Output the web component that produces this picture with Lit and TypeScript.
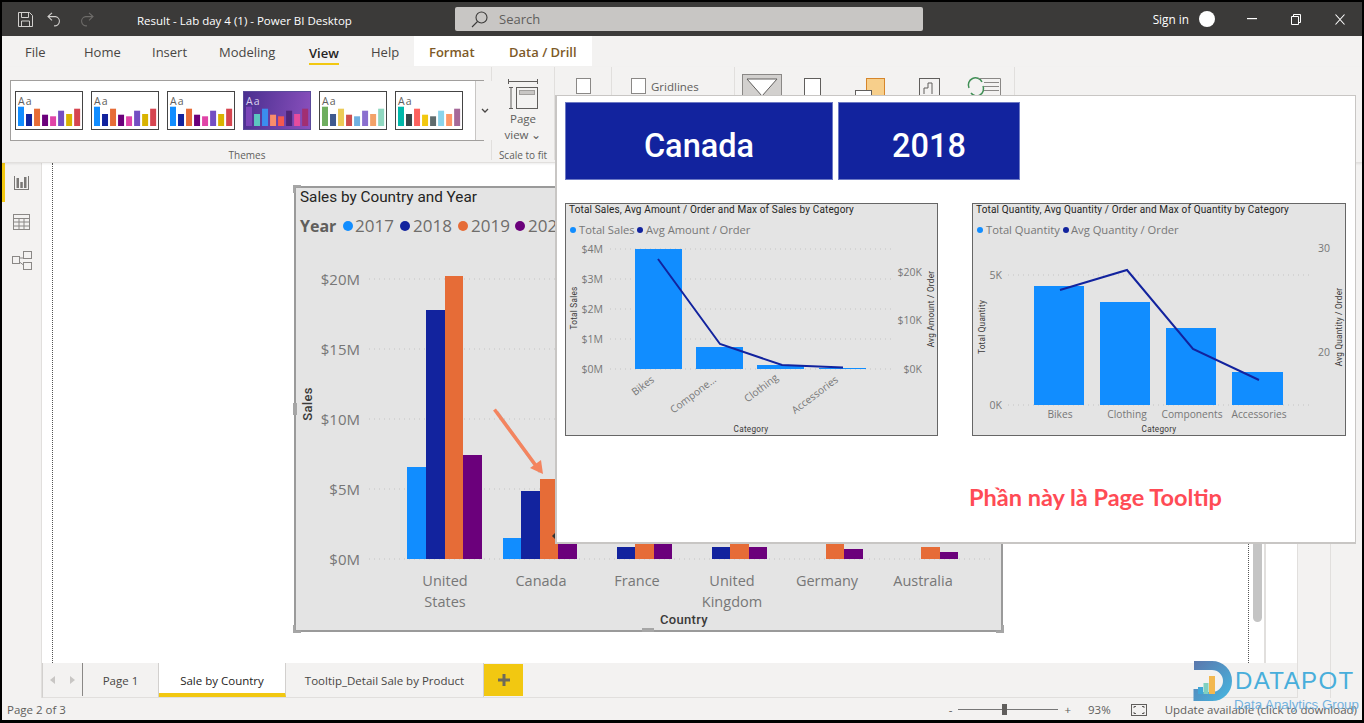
import { LitElement, html, css, svg } from "lit";
import { customElement } from "lit/decorators.js";

const THEMES = [
  { cls: "", ink: "#605e5c", bars: ["#118DFF", "#12239E", "#E66C37", "#6B007B", "#E044A7", "#744EC2", "#D9B300", "#D64550"] },
  { cls: "", ink: "#605e5c", bars: ["#118DFF", "#12239E", "#E66C37", "#6B007B", "#E044A7", "#744EC2", "#D9B300", "#D64550"] },
  { cls: "", ink: "#605e5c", bars: ["#118DFF", "#12239E", "#E66C37", "#6B007B", "#E044A7", "#744EC2", "#D9B300", "#D64550"] },
  { cls: "dark", ink: "#d9d0ee", bars: ["#7B45B8", "#5CC6C0", "#3B8EEF", "#F98D6B", "#F4584F", "#4D2578", "#E54C9E", "#A12F72"] },
  { cls: "", ink: "#605e5c", bars: ["#6FAE5F", "#3F5A8F", "#ECCB57", "#CF4D4D", "#6FB0E0", "#8A6FCF", "#F3A268", "#90D8C0"] },
  { cls: "", ink: "#605e5c", bars: ["#01B8AA", "#374649", "#FD625E", "#F2C80F", "#5F6B6D", "#8AD4EB", "#FE9666", "#A66999"] },
];
const THUMB_H = [19.3, 12, 17.3, 11.3, 9.7, 15.3, 12, 17.3];
const C = { blue: "#118DFF", navy: "#12239E", orange: "#E66C37", purple: "#6B007B" };

const rot = (x: number, y: number, t: string, cls: string, deg = -90, anchor = "middle") =>
  svg`<text class=${cls} text-anchor=${anchor} transform="translate(${x} ${y}) rotate(${deg})">${t}</text>`;
const txt = (x: number, y: number, t: string, cls: string, anchor = "start") =>
  svg`<text class=${cls} x=${x} y=${y} text-anchor=${anchor}>${t}</text>`;
const dotLine = (x1: number, x2: number, y: number) =>
  svg`<line class="grid" x1=${x1} x2=${x2} y1=${y} y2=${y}></line>`;
const bar = (x1: number, x2: number, top: number, base: number, fill: string) =>
  svg`<rect x=${x1} y=${top} width=${x2 - x1} height=${base - top} fill=${fill}></rect>`;

@customElement("app-root")
export class AppRoot extends LitElement {
  static styles = css`
    :host { display: block; position: relative; width: 1364px; height: 723px; overflow: hidden; background: #000; font-family: "Open Sans", sans-serif; color: #605e5c; }
    .app { display: flex; flex-direction: column; width: 1360px; height: 718px; margin: 2px 2px 3px; background: #f3f2f1; }
    svg { display: block; flex: none; }

    .titlebar { height: 34px; flex: none; background: #3b3a39; display: flex; align-items: center; padding-left: 16px; color: #fff; }
    .qat-save { margin-right: 14px; }
    .qat-undo { margin-right: 19px; }
    .doc { width: 318px; margin: 3px 0 0 43px; flex: none; font-size: 11.5px; white-space: nowrap; }
    .search { width: 468px; height: 24px; flex: none; background: #c8c6c4; border-radius: 2px; display: flex; align-items: center; padding-left: 16px; box-sizing: border-box; gap: 11px; font-size: 13px; color: #605e5c; }
    .win { margin-left: auto; display: flex; align-items: center; font-size: 11.8px; }
    .avatar { width: 16px; height: 16px; border-radius: 50%; background: #fff; margin: 0 32px 0 10px; }
    .win svg { margin-right: 34px; }
    .win svg:last-child { margin-right: 17px; }

    .tabs { height: 31px; flex: none; display: grid; grid-template-columns: 59px 68px 67px 90px 62px 43px 80px 98px; padding-left: 23px; font-size: 13px; color: #484644; }
    .tab { display: flex; align-items: center; height: 30px; padding-top: 2px; box-sizing: border-box; }
    .tab span { display: inline-block; }
    .tab.active { font-weight: 600; color: #252423; }
    .tab.active span { border-bottom: 2.5px solid #f2c811; padding-bottom: 1px; margin-top: 4px; }
    .tab.ctx { background: #fff; color: #7d5a28; font-weight: 600; padding-left: 15px; }

    .ribbon { height: 96px; flex: none; display: flex; box-sizing: border-box; border-bottom: 1px solid #e1dfdd; box-shadow: 0 1px 2px rgba(0,0,0,.08); position: relative; z-index: 1; }
    .group { display: flex; flex-direction: column; align-items: center; flex: none; border-right: 1px solid #e1dfdd; margin-bottom: 2px; box-sizing: border-box; }
    .group > * { flex: none; }
    .g-themes { width: 490px; padding: 13px 0 0 8px; align-items: flex-start; }
    .gallery { width: 474px; height: 61px; box-sizing: border-box; border: 1px solid #a19f9d; background: #fff; display: flex; padding: 10px 0 0 4px; gap: 8px; }
    .thumb { width: 68px; height: 39px; flex: none; background: #fff; box-sizing: border-box; border: 1px solid #444; }
    .thumb.dark { background: linear-gradient(100deg, #4a2f8f, #8a50bd); border-color: #5a4a9a; }
    .thumb text { font-family: "Open Sans", sans-serif; font-size: 10.5px; letter-spacing: 1px; }
    .more { width: 17px; height: 59px; margin: -10px 0 0 4px; border-left: 1px solid #c8c6c4; background: #f3f2f1; display: flex; align-items: center; justify-content: center; flex: none; }
    .glabel { font-size: 10px; color: #605e5c; line-height: 14px; white-space: nowrap; }
    .g-themes .glabel { width: 474px; text-align: center; margin-top: 7px; }
    .g-page { width: 63px; padding-top: 11px; }
    .g-page .line { font-size: 11.5px; line-height: 16px; }
    .g-page .line.first { margin-top: 1px; }
    .g-page .glabel { margin-top: 5px; }
    .g-mobile { width: 57px; padding-top: 11px; }
    .g-grid { width: 123px; padding: 11px 0 0 19px; align-items: flex-start; }
    .check { display: flex; align-items: center; gap: 5px; font-size: 11.5px; }
    .box { width: 15px; height: 16px; box-sizing: border-box; border: 1px solid #8a8886; background: #fff; }
    .g-panes { width: 280px; padding: 7px 0 0 7px; align-items: flex-start; }

    .body { flex: 1; display: flex; min-height: 0; }
    .rail { width: 40px; flex: none; display: flex; flex-direction: column; border-right: 1px solid #e1dfdd; box-sizing: border-box; }
    .railitem { height: 39px; display: flex; align-items: center; justify-content: center; border-left: 3px solid transparent; box-sizing: border-box; padding-right: 3px; }
    .railitem.on { border-left-color: #f2c811; }
    .center { width: 1255px; flex: none; display: flex; flex-direction: column; }
    .canvas { height: 500px; flex: none; background: #fff; display: flex; padding-left: 10px; box-sizing: border-box; }
    .page { width: 1197px; flex: none; box-sizing: border-box; border-left: 1px dotted #555; border-right: 1px dotted #555; padding: 24px 0 0 242px; }
    .scroll { display: flex; align-items: flex-end; flex: 1; padding-left: 4px; }
    .thumbbar { width: 9px; height: 459px; margin-bottom: 41px; background: #c4c4c4; border-radius: 0 0 5px 5px; }
    .track { width: 2px; height: 100%; margin-left: 2px; background: #e1dfdd; }
    .visual { width: 707px; height: 444px; overflow: visible; }

    .pages { height: 35px; flex: none; display: flex; border-left: 1px solid #d2d0ce; box-sizing: border-box; border-bottom: 1px solid #e1dfdd; }
    .nav { width: 39px; flex: none; border-right: 1px solid #8a8886; display: flex; align-items: center; justify-content: center; gap: 15px; margin-bottom: 1px; }
    .ptab { display: flex; align-items: center; justify-content: center; font-size: 11.5px; box-sizing: border-box; color: #484644; flex: none; border-right: 1px solid #d2d0ce; }
    .ptab.p1 { width: 76px; }
    .ptab.p2 { width: 127px; background: #fff; color: #252423; border-bottom: 4px solid #f2c811; padding-top: 4px; font-weight: 500; }
    .ptab.p3 { width: 198px; }
    .add { width: 39px; height: 32px; flex: none; margin-top: 1px; background: #f2c811; display: flex; align-items: center; justify-content: center; }
    .side { width: 33px; flex: none; border-left: 1px solid #e1dfdd; box-sizing: border-box; }
    .status { height: 22px; flex: none; display: flex; align-items: center; font-size: 11.5px; padding-left: 5px; color: #605e5c; border-top: 1px solid transparent; box-sizing: border-box; white-space: nowrap; }
    .zoom { margin-left: auto; display: flex; align-items: center; }
    .slider { width: 100px; height: 1px; background: #777; margin: 0 6px; position: relative; }
    .knob { position: absolute; left: 44px; top: -5px; width: 5px; height: 11px; background: #605e5c; }
    .pct { margin: 0 20px 0 17px; font-size: 11.5px; }
    .update { margin: 0 5px 0 18px; font-size: 11.5px; }

    .tip { position: absolute; left: 555px; top: 95px; width: 801px; height: 449px; box-sizing: border-box; background: #fff; border: 1px solid #c8c6c4; border-width: 1px 1px 2px 2px; padding: 6px 0 0 8px; z-index: 5; }
    .cards { display: flex; gap: 5px; }
    .card { height: 78px; box-sizing: border-box; padding-top: 9px; background: #12239E; border: 1px solid #6d79c4; color: #fff; display: flex; align-items: center; justify-content: center; font-family: Roboto, sans-serif; font-weight: 500; font-size: 32.5px; }
    .card.c1 { width: 268px; }
    .card.c2 { width: 182px; }
    .charts { display: flex; gap: 34px; margin-top: 23px; }
    .chart { background: #e4e4e4; box-sizing: border-box; border: 1px solid #666; flex: none; }
    .chart svg { overflow: hidden; }
    .note { margin: 47px 0 0 404px; font-family: Lato, sans-serif; font-weight: 700; font-size: 23.5px; line-height: 28px; color: #ff4b55; white-space: nowrap; }

    .mark { position: absolute; left: 1194px; top: 660px; width: 170px; height: 60px; z-index: 6; overflow: visible; }
    .mk1 { font-family: "Liberation Sans", sans-serif; font-size: 24px; letter-spacing: 1.4px; fill: #48aedb; }
    .mk2 { font-family: "Liberation Sans", sans-serif; font-size: 13.3px; fill: #5fa8dc; opacity: .85; }

    text { font-family: "Open Sans", sans-serif; }
    .grid { stroke: #c4c4c4; stroke-width: 1; stroke-dasharray: 1 4; }
    .t-title { font-family: Roboto, sans-serif; font-size: 15.3px; fill: #252423; }
    .t-year { font-family: "Open Sans", sans-serif; font-size: 16px; font-weight: 700; fill: #605e5c; }
    .t-leg { font-size: 17px; fill: #6f6d6b; }
    .t-ax { font-size: 15px; fill: #777; }
    .t-cat { font-size: 14.5px; fill: #777; }
    .t-name { font-family: Roboto, sans-serif; font-size: 13px; font-weight: 500; fill: #3b3a39; letter-spacing: .3px; }
    .s-title { font-family: Roboto, sans-serif; font-size: 10px; font-weight: 400; fill: #252423; letter-spacing: .15px; }
    .s-leg { font-size: 11.2px; fill: #777; }
    .s-ax { font-size: 10.5px; fill: #777; }
    .s-cat { font-size: 10.2px; fill: #777; }
    .s-name { font-family: Roboto, sans-serif; font-size: 8.2px; font-weight: 400; fill: #3b3a39; letter-spacing: .25px; }
    .handle { fill: #a6a6a6; }
  `;

  private thumb(t: (typeof THEMES)[number]) {
    return html`<div class="thumb ${t.cls}">
      <svg width="66" height="37" viewBox="0 0 66 37">
        <text x="2" y="13" fill=${t.ink}>Aa</text>
        ${t.bars.map((c, i) => svg`<rect x=${2 + i * 8.02} y=${34 - THUMB_H[i]} width="6" height=${THUMB_H[i]} fill=${c}></rect>`)}
      </svg>
    </div>`;
  }

  private mainChart() {
    const base = 559;
    const ticks: [string, number][] = [["$20M", 279], ["$15M", 349], ["$10M", 419], ["$5M", 489], ["$0M", 559]];
    const cats: [number, string, string?][] = [[445, "United", "States"], [541, "Canada"], [637, "France"], [732, "United", "Kingdom"], [827, "Germany"], [923, "Australia"]];
    const legend: [number, number, string, string][] = [[348, 355, "2017", C.blue], [405, 413, "2018", C.navy], [463, 471, "2019", C.orange], [520, 528, "2020", C.purple]];
    const bars: [number, number, number, string][] = [
      [407, 426, 467, C.blue], [426, 445, 310, C.navy], [445, 463, 276, C.orange], [463, 482, 455, C.purple],
      [503, 521, 538, C.blue], [521, 540, 491, C.navy], [540, 558, 479, C.orange], [558, 577, 544, C.purple],
      [617, 635, 547, C.navy], [635, 654, 520, C.orange], [654, 672, 530, C.purple],
      [712, 730, 547, C.navy], [730, 749, 530, C.orange], [749, 767, 547, C.purple],
      [826, 844, 525, C.orange], [844, 863, 549, C.purple],
      [921, 940, 547, C.orange], [940, 958, 552, C.purple],
    ];
    return html`<svg class="visual" viewBox="295 187 707 444">
      <rect x="295" y="187" width="707" height="444" fill="#e4e4e4" stroke="#9a9a9a" stroke-width="2"></rect>
      ${txt(300, 202, "Sales by Country and Year", "t-title")}
      ${txt(300, 232, "Year", "t-year")}
      ${legend.map(([d, x, t, c]) => svg`<circle cx=${d} cy="226" r="5" fill=${c}></circle>${txt(x, 232, t, "t-leg")}`)}
      ${ticks.map(([t, y]) => svg`${dotLine(369, 992, y)}${txt(360, y + 5.5, t, "t-ax", "end")}`)}
      ${bars.map(([a, b, top, c]) => bar(a, b, top, base, c))}
      ${cats.map(([x, a, b]) => svg`${txt(x, 586, a, "t-cat", "middle")}${b ? txt(x, 607, b, "t-cat", "middle") : ""}`)}
      ${txt(684, 624, "Country", "t-name", "middle")}
      ${rot(312, 404, "Sales", "t-name")}
      <line x1="497" y1="412" x2="540" y2="472" stroke="#777" stroke-width="3" opacity=".45"></line>
      <line x1="494.5" y1="409.5" x2="537" y2="467" stroke="#f4845f" stroke-width="3.5"></line>
      <path d="M543 474 L530 468 L541 460 Z" fill="#f4845f"></path>
      <path d="M552 536 L555 533 V539 Z" fill="#333"></path>
      <path class="handle" d="M293 185 h8 v2.5 h-5.5 v5.5 h-2.5 Z"></path>
      <path class="handle" d="M293 625 v8 h8 v-2.5 h-5.5 v-5.5 Z"></path>
      <path class="handle" d="M1004 625 v8 h-8 v-2.5 h5.5 v-5.5 Z"></path>
      <rect class="handle" x="293" y="403" width="4" height="12"></rect>
      <rect class="handle" x="642" y="628" width="12" height="4"></rect>
    </svg>`;
  }

  private salesChart() {
    const base = 369;
    return html`<div class="chart">
      <svg width="371" height="231" viewBox="566 204 371 231">
        ${txt(569, 213, "Total Sales, Avg Amount / Order and Max of Sales by Category", "s-title")}
        <circle cx="573" cy="230" r="3" fill=${C.blue}></circle>${txt(579, 234, "Total Sales", "s-leg")}
        <circle cx="640" cy="230" r="3" fill=${C.navy}></circle>${txt(646, 234, "Avg Amount / Order", "s-leg")}
        ${([["$4M", 249], ["$3M", 279], ["$2M", 309], ["$1M", 339], ["$0M", 369]] as [string, number][]).map(([t, y]) => svg`${dotLine(610, 893, y)}${txt(603, y + 4, t, "s-ax", "end")}`)}
        ${([["$20K", 272], ["$10K", 320], ["$0K", 369]] as [string, number][]).map(([t, y]) => txt(922, y + 4, t, "s-ax", "end"))}
        ${bar(635, 682, 249, base, C.blue)}${bar(696, 743, 347, base, C.blue)}${bar(757, 804, 365, base, C.blue)}${bar(819, 866, 368, base, C.blue)}
        <polyline points="658,259 720,344 782,365 843,367.5" fill="none" stroke=${C.navy} stroke-width="2"></polyline>
        ${rot(655, 381, "Bikes", "s-cat", -37, "end")}
        ${rot(717, 381, "Compone...", "s-cat", -37, "end")}
        ${rot(779, 379, "Clothing", "s-cat", -37, "end")}
        ${rot(839, 381, "Accessories", "s-cat", -37, "end")}
        ${txt(751, 432, "Category", "s-name", "middle")}
        ${rot(577, 308, "Total Sales", "s-name")}
        ${rot(934, 309, "Avg Amount / Order", "s-name")}
      </svg>
    </div>`;
  }

  private qtyChart() {
    const base = 405;
    const names: [number, string][] = [[1060, "Bikes"], [1127, "Clothing"], [1192, "Components"], [1259, "Accessories"]];
    return html`<div class="chart">
      <svg width="372" height="231" viewBox="973 204 372 231">
        ${txt(976, 213, "Total Quantity, Avg Quantity / Order and Max of Quantity by Category", "s-title")}
        <circle cx="980" cy="230" r="3" fill=${C.blue}></circle>${txt(986, 234, "Total Quantity", "s-leg")}
        <circle cx="1066" cy="230" r="3" fill=${C.navy}></circle>${txt(1071, 234, "Avg Quantity / Order", "s-leg")}
        ${dotLine(1008, 1312, 275)}${dotLine(1008, 1312, 405)}
        ${txt(1002, 279, "5K", "s-ax", "end")}${txt(1002, 409, "0K", "s-ax", "end")}
        ${txt(1318, 252, "30", "s-ax")}${txt(1318, 356, "20", "s-ax")}
        ${bar(1034, 1084, 286, base, C.blue)}${bar(1100, 1150, 302, base, C.blue)}${bar(1166, 1216, 328, base, C.blue)}${bar(1232, 1283, 372, base, C.blue)}
        <polyline points="1060,290 1127,270 1193,349 1259,380" fill="none" stroke=${C.navy} stroke-width="2"></polyline>
        ${names.map(([x, t]) => txt(x, 418, t, "s-cat", "middle"))}
        ${txt(1159, 432, "Category", "s-name", "middle")}
        ${rot(985, 327, "Total Quantity", "s-name")}
        ${rot(1342, 327, "Avg Quantity / Order", "s-name")}
      </svg>
    </div>`;
  }

  render() {
    return html`
      <div class="app">
        <div class="titlebar">
          <svg class="qat-save" width="15" height="15" viewBox="0 0 15 15" fill="none" stroke="#d2d0ce"><path d="M.5 .5 H11.5 L14.5 3.5 V14.5 H.5 Z M3.5 .5 V5.5 H10.5 V.5 M3.5 14.5 V9 H11.5 V14.5"></path></svg>
          <svg class="qat-undo" width="14" height="15" viewBox="0 0 14 15" fill="none" stroke="#d2d0ce" stroke-width="1.1"><path d="M5 .8 L1 4.6 L5 8.4 M1 4.6 H8.5 A4.6 4.6 0 0 1 7 13.8"></path></svg>
          <svg width="14" height="15" viewBox="0 0 14 15" fill="none" stroke="#6e6c6a" stroke-width="1.1"><path d="M9 .8 L13 4.6 L9 8.4 M13 4.6 H5.5 A4.6 4.6 0 0 0 7 13.8"></path></svg>
          <div class="doc">Result - Lab day 4 (1) - Power BI Desktop</div>
          <div class="search">
            <svg width="17" height="17" viewBox="0 0 17 17" fill="none" stroke="#3b3a39" stroke-width="1.1"><circle cx="10.5" cy="6.5" r="5.5"></circle><path d="M6.5 10.5 L1 16"></path></svg>
            Search
          </div>
          <div class="win">
            Sign in <div class="avatar"></div>
            <svg width="10" height="2" viewBox="0 0 10 2"><rect width="10" height="1.2" fill="#fff"></rect></svg>
            <svg width="10" height="11" viewBox="0 0 10 11" fill="none" stroke="#fff"><path d="M2.5 2.5 V.5 H9.5 V8.5 H7.5 M.5 2.5 H7.5 V10.5 H.5 Z"></path></svg>
            <svg width="10" height="11" viewBox="0 0 10 11" fill="none" stroke="#fff" stroke-width="1.1"><path d="M.5 .5 L9.5 10.5 M9.5 .5 L.5 10.5"></path></svg>
          </div>
        </div>

        <div class="tabs">
          <div class="tab"><span>File</span></div>
          <div class="tab"><span>Home</span></div>
          <div class="tab"><span>Insert</span></div>
          <div class="tab"><span>Modeling</span></div>
          <div class="tab active"><span>View</span></div>
          <div class="tab"><span>Help</span></div>
          <div class="tab ctx"><span>Format</span></div>
          <div class="tab ctx"><span>Data / Drill</span></div>
        </div>

        <div class="ribbon">
          <div class="group g-themes">
            <div class="gallery">
              ${THEMES.map((t) => this.thumb(t))}
              <div class="more"><svg width="8" height="5" viewBox="0 0 8 5" fill="none" stroke="#484644" stroke-width="1.3"><path d="M1 1 L4 4 L7 1"></path></svg></div>
            </div>
            <div class="glabel">Themes</div>
          </div>
          <div class="group g-page">
            <svg width="30" height="32" viewBox="0 0 30 32" fill="none" stroke="#605e5c"><path d="M.5 1 V6 M.5 3.5 H29.5 M29.5 1 V6 M1 9.5 H5 M3 9.5 V30.5 M1 30.5 H5"></path><rect x="8.5" y="9.5" width="21" height="21"></rect><rect x="11.5" y="12.5" width="15" height="4" fill="#c8c6c4" stroke="#a19f9d"></rect></svg>
            <div class="line first">Page</div>
            <div class="line">view ⌄</div>
            <div class="glabel">Scale to fit</div>
          </div>
          <div class="group g-mobile">
            <div class="box"></div>
          </div>
          <div class="group g-grid">
            <div class="check"><div class="box"></div>Gridlines</div>
          </div>
          <div class="group g-panes">
            <svg width="270" height="24" viewBox="0 0 270 24" fill="none" stroke="#605e5c">
              <rect x=".5" y=".5" width="39" height="23" fill="#d2d0ce" stroke="#8a8886"></rect>
              <path d="M5 5 H35 L20 22 Z" fill="#fff"></path>
              <rect x="62.5" y="4.5" width="16" height="20" fill="#fff"></rect>
              <rect x="124.5" y="4.5" width="18" height="20" fill="#f7cf8b" stroke="#d6862b"></rect>
              <rect x="113.5" y="16.5" width="16" height="8" fill="#fff"></rect>
              <rect x="177.5" y="4.5" width="20" height="20"></rect>
              <path d="M182 20 V14 H186 V9 H190 V20"></path>
              <path d="M227 14 A7 7 0 0 1 240 8 M241 12 A7 7 0 0 1 229 19" stroke="#3f8f55" stroke-width="1.5"></path>
              <path d="M236.5 4.5 H258.5 V24 M242 8.5 H257 M242 12.5 H257 M242 16.5 H257" stroke="#8a8886"></path>
            </svg>
          </div>
        </div>

        <div class="body">
          <div class="rail">
            <div class="railitem on">
              <svg width="15" height="15" viewBox="0 0 15 15" fill="#7a7876"><path d="M0 1 H1 V14 H14 V1 H15 V15 H0 Z"></path><rect x="2.5" y="3" width="2.5" height="10"></rect><rect x="6.3" y="7" width="2.5" height="6"></rect><rect x="10" y="2" width="2.5" height="11"></rect></svg>
            </div>
            <div class="railitem">
              <svg width="17" height="16" viewBox="0 0 17 16" fill="none" stroke="#8a8886"><rect x=".5" y=".5" width="16" height="15"></rect><path d="M.5 4.5 H16.5 M.5 8 H16.5 M.5 12 H16.5 M6 4.5 V15.5 M11 4.5 V15.5"></path></svg>
            </div>
            <div class="railitem">
              <svg width="20" height="19" viewBox="0 0 20 19" fill="none" stroke="#8a8886"><rect x=".5" y="5.5" width="7" height="7"></rect><rect x="11.5" y=".5" width="8" height="7"></rect><rect x="11.5" y="11.5" width="8" height="7"></rect><path d="M7.5 7 H11.5 M7.5 11 L11.5 14"></path></svg>
            </div>
          </div>
          <div class="center">
            <div class="canvas">
              <div class="page">${this.mainChart()}</div>
              <div class="scroll"><div class="thumbbar"></div><div class="track"></div></div>
            </div>
            <div class="pages">
              <div class="nav">
                <svg width="5" height="8" viewBox="0 0 5 8"><path d="M5 0 V8 L0 4 Z" fill="#c8c6c4"></path></svg>
                <svg width="5" height="8" viewBox="0 0 5 8"><path d="M0 0 V8 L5 4 Z" fill="#c8c6c4"></path></svg>
              </div>
              <div class="ptab p1">Page 1</div>
              <div class="ptab p2">Sale by Country</div>
              <div class="ptab p3">Tooltip_Detail Sale by Product</div>
              <div class="add"><svg width="12" height="12" viewBox="0 0 12 12"><path d="M4.5 0 H7.5 V4.5 H12 V7.5 H7.5 V12 H4.5 V7.5 H0 V4.5 H4.5 Z" fill="#6e6a5a"></path></svg></div>
            </div>
          </div>
          <div class="side"></div>
          <div class="side"></div>
        </div>

        <div class="status">
          Page 2 of 3
          <div class="zoom">
            <span>-</span>
            <div class="slider"><div class="knob"></div></div>
            <span>+</span>
            <span class="pct">93%</span>
            <svg width="16" height="12" viewBox="0 0 16 12" fill="none" stroke="#605e5c"><rect x=".5" y=".5" width="15" height="11"></rect><path d="M3 4 V2.5 H5 M13 4 V2.5 H11 M3 8 V9.5 H5 M13 8 V9.5 H11"></path></svg>
            <span class="update">Update available (click to download)</span>
          </div>
        </div>
      </div>

      <div class="tip">
        <div class="cards">
          <div class="card c1">Canada</div>
          <div class="card c2">2018</div>
        </div>
        <div class="charts">
          ${this.salesChart()}
          ${this.qtyChart()}
        </div>
        <div class="note">Phần này là Page Tooltip</div>
      </div>

      <svg class="mark" viewBox="1194 660 170 60">
        <defs><linearGradient id="dg" x1="1194" x2="1232" y1="662" y2="700" gradientUnits="userSpaceOnUse"><stop offset="0" stop-color="#5b78ad"></stop><stop offset="1" stop-color="#45b8e2"></stop></linearGradient></defs>
        <path d="M1194 665.5 H1212 A15.5 15.5 0 0 1 1212 696.5 H1198 V689" fill="none" stroke="url(#dg)" stroke-width="9"></path>
        <rect x="1198" y="687" width="5" height="7" fill="#3fa7d8"></rect>
        <rect x="1203.5" y="683" width="5" height="11" fill="#7fd0c0"></rect>
        <rect x="1209" y="676" width="6" height="18" fill="#f2b84f"></rect>
        ${txt(1235, 689, "DATAPOT", "mk1")}
        ${txt(1234, 709, "Data Analytics Group", "mk2")}
      </svg>
    `;
  }
}
